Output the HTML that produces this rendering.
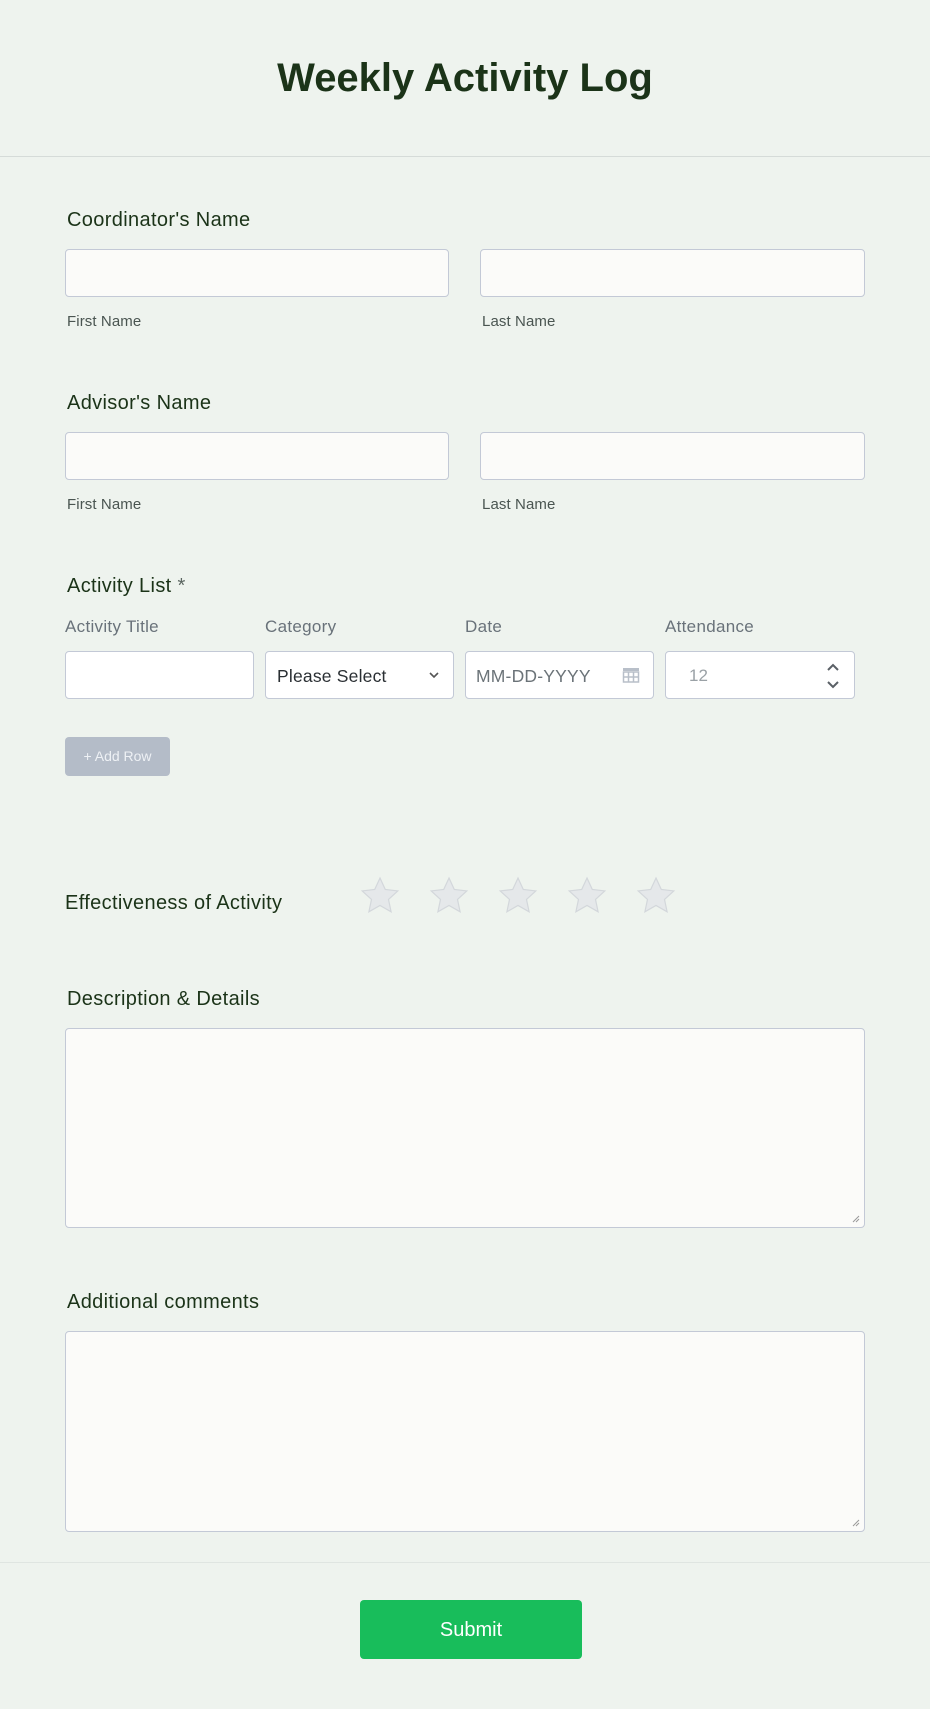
<!DOCTYPE html>
<html><head><meta charset="utf-8"><style>
*{box-sizing:border-box;margin:0;padding:0}
body{width:930px;height:1709px;background:#eef3ee;font-family:"Liberation Sans",sans-serif;position:relative;overflow:hidden}
.a{position:absolute}
.t{color:#1b3318;font-size:20px;line-height:24px;letter-spacing:0.35px}
.s{color:#4a5551;font-size:15px;line-height:18px;letter-spacing:0.1px}
.h{color:#69727a;font-size:17px;line-height:22px;letter-spacing:0.3px}
.in{position:absolute;background:#fbfbf9;border:1px solid #c3c9d6;border-radius:4px}
.w{background:#fff}
.rs{position:absolute;right:4px;bottom:4px}
</style></head><body>
<div class="a" style="left:0;top:53px;width:930px;text-align:center;font-size:40px;font-weight:bold;color:#1b3318;line-height:50px">Weekly Activity Log</div>
<div class="a" style="left:0;top:156px;width:930px;height:1px;background:#d5dbd8"></div>

<div class="a t" style="left:67px;top:208px">Coordinator's Name</div>
<div class="in" style="left:65px;top:249px;width:384px;height:48px"></div>
<div class="in" style="left:480px;top:249px;width:385px;height:48px"></div>
<div class="a s" style="left:67px;top:313px">First Name</div>
<div class="a s" style="left:482px;top:313px">Last Name</div>

<div class="a t" style="left:67px;top:391px">Advisor's Name</div>
<div class="in" style="left:65px;top:432px;width:384px;height:48px"></div>
<div class="in" style="left:480px;top:432px;width:385px;height:48px"></div>
<div class="a s" style="left:67px;top:496px">First Name</div>
<div class="a s" style="left:482px;top:496px">Last Name</div>

<div class="a t" style="left:67px;top:574px">Activity List <span style="color:#5a6560">*</span></div>
<div class="a h" style="left:65px;top:616px">Activity Title</div>
<div class="a h" style="left:265px;top:616px">Category</div>
<div class="a h" style="left:465px;top:616px">Date</div>
<div class="a h" style="left:665px;top:616px">Attendance</div>
<div class="in w" style="left:65px;top:651px;width:189px;height:48px"></div>
<div class="in w" style="left:265px;top:651px;width:189px;height:48px"><span class="a" style="left:11px;top:14px;font-size:17.5px;color:#2a2f33;letter-spacing:0.2px">Please Select</span>
<svg class="a" style="left:163px;top:19px" width="10" height="8" viewBox="0 0 10 8"><path d="M1 2l4 4 4-4" fill="none" stroke="#555" stroke-width="1.6"/></svg></div>
<div class="in w" style="left:465px;top:651px;width:189px;height:48px"><span class="a" style="left:10px;top:14px;font-size:17.5px;color:#6b7378;letter-spacing:0.2px">MM-DD-YYYY</span>
<svg class="a" style="left:156px;top:14px" width="18" height="18" viewBox="0 0 18 18"><rect x="1" y="2" width="16" height="3" fill="#b8bfc9"/><rect x="1.5" y="6" width="15" height="10" fill="none" stroke="#b8bfc9" stroke-width="1.5"/><path d="M6.5 6v10M11.5 6v10M1.5 11h15" stroke="#b8bfc9" stroke-width="1.5"/></svg></div>
<div class="in w" style="left:665px;top:651px;width:190px;height:48px"><span class="a" style="left:23px;top:14px;font-size:17px;color:#9aa1a6">12</span>
<svg class="a" style="left:160px;top:11px" width="14" height="26" viewBox="0 0 14 26"><path d="M2 7l5-5 5 5M2 19l5 5 5-5" fill="none" stroke="#5a6066" stroke-width="2"/></svg></div>
<div class="a" style="left:65px;top:737px;width:105px;height:39px;background:#b4bcc8;border-radius:4px;color:#eef1f5;font-size:14px;line-height:39px;text-align:center">+ Add Row</div>

<div class="a t" style="left:65px;top:891px">Effectiveness of Activity</div>
<svg class="a" style="left:360px;top:876px" width="320" height="38" viewBox="0 0 320 38">
<g fill="#e5e8ea" stroke="#d3d7db" stroke-width="1.2">
<path id="st" d="M20 2l5.3 11.5 12.5 1.4-9.3 8.5 2.6 12.4L20 29.5 8.9 35.8l2.6-12.4-9.3-8.5 12.5-1.4z"/>
<use href="#st" x="69"/><use href="#st" x="138"/><use href="#st" x="207"/><use href="#st" x="276"/>
</g></svg>

<div class="a t" style="left:67px;top:987px">Description &amp; Details</div>
<div class="in" style="left:65px;top:1028px;width:800px;height:200px"><svg class="rs" width="8" height="8" viewBox="0 0 8 8"><path d="M7 1L1 7M7 4L4 7" stroke="#999" stroke-width="1"/></svg></div>
<div class="a t" style="left:67px;top:1290px">Additional comments</div>
<div class="in" style="left:65px;top:1331px;width:800px;height:201px"><svg class="rs" width="8" height="8" viewBox="0 0 8 8"><path d="M7 1L1 7M7 4L4 7" stroke="#999" stroke-width="1"/></svg></div>
<div class="a" style="left:0;top:1562px;width:930px;height:1px;background:#dfe5e1"></div>
<div class="a" style="left:360px;top:1600px;width:222px;height:59px;background:#18bd5b;border-radius:4px;color:#fff;font-size:20px;line-height:61px;text-align:center">Submit</div>
</body></html>
